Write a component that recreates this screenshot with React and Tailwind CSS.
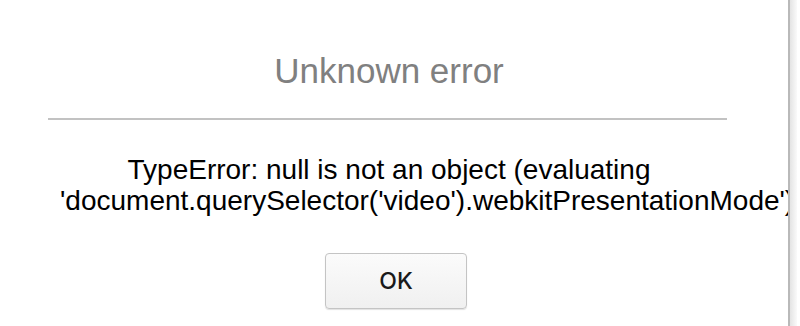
import React from 'react';

const ErrorDialog = () => (
  <div className="flex h-[326px] w-[800px] bg-white font-['Liberation_Sans',Arial,sans-serif]">
    <div className="w-[788px] overflow-hidden">
      <div className="flex w-[778px] flex-col">
        <h1 className="mt-[51px] text-center text-[35px] leading-[40px] font-normal text-[#808080]">
          Unknown error
        </h1>
        <div className="mt-[27px] ml-[48px] h-[2px] w-[679px] bg-[#c2c2c2]" />
        <div className="mt-[34px] px-[60px] text-[28px] leading-[31px] text-black">
          <div className="text-center">TypeError: null is not an object (evaluating</div>
          <div className="whitespace-nowrap text-left">'document.querySelector('video').webkitPresentationMode')</div>
        </div>
        <div className="mt-[37px] flex justify-center pl-[14px]">
          <button className="h-[56px] w-[142px] rounded-[4px] border border-[#c4c4c4] bg-gradient-to-b from-[#fbfbfb] to-[#f0f0f0] font-['Inter',sans-serif] text-[23px] font-medium text-[#1a1a1a] shadow-[0_1px_1px_rgba(0,0,0,0.12)]">
            OK
          </button>
        </div>
      </div>
    </div>
    <div className="w-[2px] bg-[#b9b9b9]" />
    <div className="w-[7px] bg-gradient-to-r from-[#e4e4e4] to-[#fafafa]" />
  </div>
);

export default function App() {
  return <ErrorDialog />;
}
